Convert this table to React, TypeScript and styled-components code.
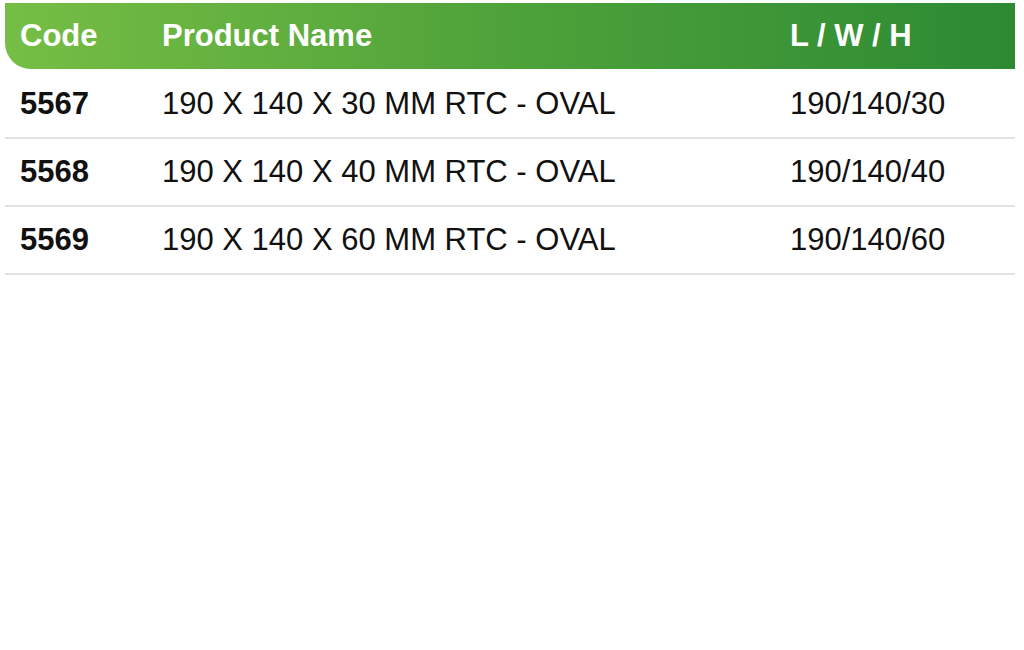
import React from "react";
import styled, { createGlobalStyle } from "styled-components";

const GlobalStyle = createGlobalStyle`
  html, body {
    margin: 0;
    padding: 0;
    background: #ffffff;
  }
  body {
    font-family: "Liberation Sans", Arial, sans-serif;
  }
`;

const Page = styled.div`
  padding: 3px 9px 0 5px;
`;

const Table = styled.div`
  display: flex;
  flex-direction: column;
  width: 1010px;
`;

const Body = styled.div`
  display: flex;
  flex-direction: column;
  padding-top: 2px;
`;

const Grid = styled.div`
  display: grid;
  grid-template-columns: 142px 628px 1fr;
  align-items: center;
  padding-left: 15px;
  box-sizing: border-box;
  font-size: 31px;
`;

const HeaderRow = styled(Grid)`
  background: linear-gradient(to right, #76be45 0%, #4ea23a 50%, #2d8a33 100%);
  border-bottom-left-radius: 26px;
  color: #ffffff;
  font-weight: 700;
  height: 66px;
`;

const BodyRow = styled(Grid)`
  border-bottom: 2px solid #e2e2e2;
  color: #111111;
  font-weight: 400;
  height: 68px;
`;

const Cell = styled.div<{ $bold?: boolean }>`
  font-weight: ${({ $bold }) => ($bold ? 700 : "inherit")};
  white-space: nowrap;
`;

type Product = {
  code: string;
  name: string;
  size: string;
};

const products: Product[] = [
  { code: "5567", name: "190 X 140 X 30 MM RTC - OVAL", size: "190/140/30" },
  { code: "5568", name: "190 X 140 X 40 MM RTC - OVAL", size: "190/140/40" },
  { code: "5569", name: "190 X 140 X 60 MM RTC - OVAL", size: "190/140/60" },
];

export default function App() {
  return (
    <>
      <GlobalStyle />
      <Page>
        <Table>
          <HeaderRow>
            <Cell>Code</Cell>
            <Cell>Product Name</Cell>
            <Cell>L / W / H</Cell>
          </HeaderRow>
          <Body>
            {products.map((p) => (
              <BodyRow key={p.code}>
                <Cell $bold>{p.code}</Cell>
                <Cell>{p.name}</Cell>
                <Cell>{p.size}</Cell>
              </BodyRow>
            ))}
          </Body>
        </Table>
      </Page>
    </>
  );
}
